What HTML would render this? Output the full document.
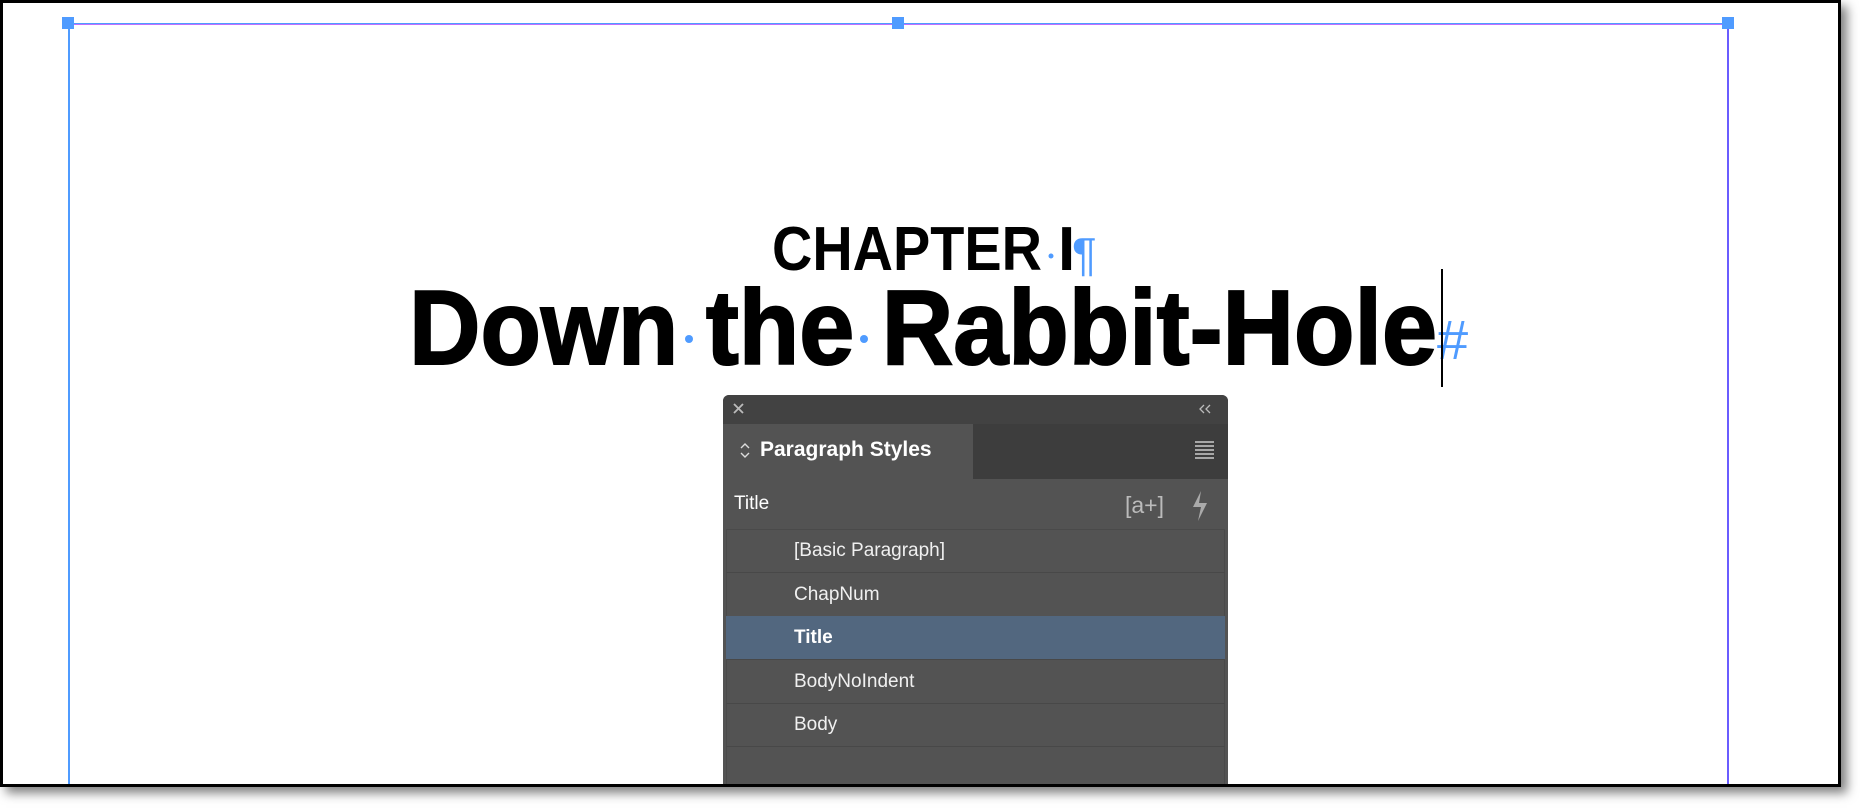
<!DOCTYPE html>
<html><head><meta charset="utf-8"><style>
html,body{margin:0;padding:0;width:1860px;height:808px;background:#fff;overflow:hidden;font-family:"Liberation Sans",sans-serif}
#win{position:absolute;left:0;top:0;width:1835px;height:781px;border:3px solid #000;background:#fff;box-shadow:6px 6px 10px rgba(0,0,0,.5);overflow:hidden}
.ln{position:absolute;background:#4f9bff}
.h{position:absolute;width:12px;height:12px;background:#4f9bff}
#panel{position:absolute;left:720px;top:392px;width:505px;height:400px;background:#535353;border-radius:6px 6px 0 0;overflow:hidden;color:#eee}
.row{position:absolute;left:3px;width:499px;height:43px;border-bottom:1px solid #484848;font-size:19px;line-height:43px;text-indent:68px;color:#f0f0f0}
</style></head><body>
<div id="win">
<div class="ln" style="left:65px;top:20px;width:1662px;height:2px;background:linear-gradient(#4f9bff 60%,#c070ff 60%)"></div>
<div class="ln" style="left:65px;top:20px;width:2px;height:770px"></div>
<div class="ln" style="left:1724px;top:20px;width:2px;height:770px;background:#6a5cff"></div>
<div class="h" style="left:59px;top:14px"></div>
<div class="h" style="left:889px;top:14px"></div>
<div class="h" style="left:1719px;top:14px"></div>
<svg style="position:absolute;left:0;top:0" width="1835" height="781">
<text x="769" y="267" font-family="Liberation Sans" font-weight="bold" font-size="62" textLength="270" lengthAdjust="spacingAndGlyphs">CHAPTER</text>
<circle cx="1048" cy="253" r="2.5" fill="#4f9bff"/>
<text x="1055" y="267" font-family="Liberation Sans" font-weight="bold" font-size="62">I</text>
<text x="1069" y="267" fill="#4f9bff" font-size="46" font-family="Liberation Sans">¶</text>
<text x="406" y="361" font-family="Liberation Sans" font-weight="bold" font-size="106" textLength="1028" lengthAdjust="spacingAndGlyphs" stroke="#000" stroke-width="2">Down<tspan fill="#fff" stroke="none"> </tspan>the<tspan fill="#fff" stroke="none"> </tspan>Rabbit-Hole</text>
<circle cx="686" cy="336" r="4" fill="#4f9bff"/>
<circle cx="861" cy="336" r="4" fill="#4f9bff"/>
<text x="1434" y="356" fill="#4f9bff" font-size="56" font-family="Liberation Sans">#</text>
<rect x="1438" y="266" width="2" height="118" fill="#000"/>
</svg>
<div id="panel">
<div style="position:absolute;left:0;top:0;width:505px;height:29px;background:#424242"></div>
<svg style="position:absolute;left:0;top:0" width="505" height="30">
<path d="M11 9l9 9M20 9l-9 9" stroke="#bbb" stroke-width="1.8"/>
<path d="M481 10l-4 4 4 4M487 10l-4 4 4 4" stroke="#bbb" stroke-width="1.3" fill="none"/>
</svg>
<div style="position:absolute;left:250px;top:29px;width:255px;height:55px;background:#3d3d3d"></div>
<div style="position:absolute;left:0;top:29px;width:250px;height:55px;background:#535353;font-weight:bold;font-size:21px;line-height:52px;color:#fff;text-indent:37px">Paragraph Styles</div>
<svg style="position:absolute;left:0;top:29px" width="505" height="55">
<path d="M18 24l4-4 4 4M18 29l4 4 4-4" stroke="#ddd" stroke-width="1.4" fill="none"/>
<path d="M472 18h19M472 22h19M472 26h19M472 30h19M472 34h19" stroke="#ccc" stroke-width="1.5"/>
</svg>
<div style="position:absolute;left:11px;top:84px;height:50px;line-height:50px;font-size:19px;color:#fff">Title</div>
<svg style="position:absolute;left:0;top:84px" width="505" height="50">
<text x="402" y="34" fill="#bbb" font-size="23" font-family="Liberation Sans">[a+]</text>
<path d="M478 12l-8 16h8l-3 14 9-18h-8z" fill="#aaa"/>
</svg>
<div style="position:absolute;left:3px;top:134px;width:499px;height:270px;border:1px solid #4a4a4a;box-sizing:border-box"></div>
<div class="row" style="top:134px">[Basic Paragraph]</div>
<div class="row" style="top:178px">ChapNum</div>
<div class="row" style="top:221px;background:#52677f;font-weight:bold;color:#fff">Title</div>
<div class="row" style="top:265px">BodyNoIndent</div>
<div class="row" style="top:308px">Body</div>
</div>
</div>
</body></html>
